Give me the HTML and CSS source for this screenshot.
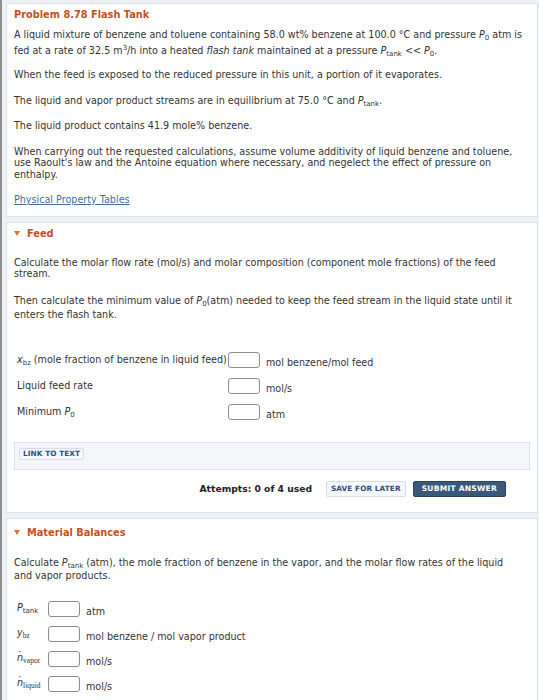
FILE: index.html
```html
<!DOCTYPE html>
<html>
<head>
<meta charset="utf-8">
<link rel="stylesheet" href="styles.css">
</head>
<body>
<div class="page">
  <section class="card intro">
    <h1 class="title">Problem 8.78 Flash Tank</h1>
    <p class="first">A liquid mixture of benzene and toluene containing 58.0 wt% benzene at 100.0 °C and pressure <i>P</i><sub>0</sub> atm is fed at a rate of 32.5 m<sup>3</sup>/h into a heated <i>flash tank</i> maintained at a pressure <i>P</i><sub>tank</sub> &lt;&lt; <i>P</i><sub>0</sub>.</p>
    <p>When the feed is exposed to the reduced pressure in this unit, a portion of it evaporates.</p>
    <p>The liquid and vapor product streams are in equilibrium at 75.0 °C and <i>P</i><sub>tank</sub>.</p>
    <p>The liquid product contains 41.9 mole% benzene.</p>
    <p>When carrying out the requested calculations, assume volume additivity of liquid benzene and toluene, use Raoult's law and the Antoine equation where necessary, and negelect the effect of pressure on enthalpy.</p>
    <p class="linkp"><a class="link" href="#">Physical Property Tables</a></p>
  </section>

  <section class="card part">
    <h2 class="part-head"><span class="tri"></span>Feed</h2>
    <p>Calculate the molar flow rate (mol/s) and molar composition (component mole fractions) of the feed stream.</p>
    <p class="p-tall">Then calculate the minimum value of <i>P</i><sub>0</sub>(atm) needed to keep the feed stream in the liquid state until it enters the flash tank.</p>
    <div class="form feed-form">
      <div class="lbl"><i>x</i><sub>bz</sub> (mole fraction of benzene in liquid feed)</div>
      <div class="box"></div>
      <div class="unit">mol benzene/mol feed</div>
      <div class="lbl">Liquid feed rate</div>
      <div class="box"></div>
      <div class="unit">mol/s</div>
      <div class="lbl">Minimum <i>P</i><sub>0</sub></div>
      <div class="box"></div>
      <div class="unit">atm</div>
    </div>
    <div class="tools">
      <span class="btn-light">LINK TO TEXT</span>
    </div>
    <div class="actions">
      <span class="attempts">Attempts: 0 of 4 used</span>
      <span class="btn-light save">SAVE FOR LATER</span>
      <span class="btn-dark">SUBMIT ANSWER</span>
    </div>
  </section>

  <section class="card part">
    <h2 class="part-head mb-head"><span class="tri"></span>Material Balances</h2>
    <p class="mb-p">Calculate <i>P</i><sub>tank</sub> (atm), the mole fraction of benzene in the vapor, and the molar flow rates of the liquid and vapor products.</p>
    <div class="form mb-form">
      <div class="lbl2"><i>P</i><sub>tank</sub></div>
      <div class="box"></div>
      <div class="unit">atm</div>
      <div class="lbl2"><i>y</i><sub class="serif">bz</sub></div>
      <div class="box"></div>
      <div class="unit">mol benzene / mol vapor product</div>
      <div class="lbl2"><i class="ndot">n</i><sub class="serif">vapor</sub></div>
      <div class="box"></div>
      <div class="unit">mol/s</div>
      <div class="lbl2"><i class="ndot">n</i><sub class="serif">liquid</sub></div>
      <div class="box"></div>
      <div class="unit">mol/s</div>
    </div>
  </section>
</div>
</body>
</html>
```

FILE: styles.css
```css
html, body {
  margin: 0;
  padding: 0;
}
body {
  background: #eef1f5;
  border-left: 2px solid #8e8e8e;
  font-family: "DejaVu Sans", Verdana, sans-serif;
  font-size: 9.6px;
  color: #333;
  min-height: 700px;
  box-sizing: border-box;
}
.page {
  padding: 3px 1px 0 4px;
  display: flex;
  flex-direction: column;
  gap: 5px;
}
.card {
  background: #fff;
  border: 1px solid #dde2e8;
  padding: 5px 7px 8px;
}
p {
  margin: 0 0 14px;
  line-height: 11.5px;
}
sub, sup {
  font-size: 7px;
  line-height: 0;
}
sub {
  vertical-align: -2px;
}
sub.serif {
  font-family: "Liberation Serif", serif;
  font-size: 7.5px;
}
.title {
  font-size: 9.8px;
  font-weight: bold;
  color: #c4501d;
  margin: 0 0 6px;
  line-height: 12px;
}
.intro {
  padding-bottom: 10px;
}
.intro p.first {
  line-height: 16px;
  margin-bottom: 10px;
}
.linkp {
  margin: 0;
}
.link {
  color: #3f6fa3;
}
.part-head {
  display: flex;
  align-items: center;
  gap: 7px;
  font-size: 9.8px;
  font-weight: bold;
  color: #c4501d;
  margin: 0 0 18px;
}
.mb-head {
  margin-top: 3px;
}
.tri {
  width: 0;
  height: 0;
  border-left: 3.5px solid transparent;
  border-right: 3.5px solid transparent;
  border-top: 5px solid #e2702e;
}
.p-tall {
  line-height: 14px;
}
.mb-p {
  padding-right: 16px;
  line-height: 13px;
}
.form {
  display: grid;
  align-items: center;
}
.lbl {
  white-space: nowrap;
}
.feed-form {
  grid-template-columns: 205px 32px auto;
  row-gap: 10px;
  column-gap: 6px;
  margin: 30px 0 22px 3px;
}
.box {
  width: 30px;
  height: 14px;
  border: 1px solid #8d8d8d;
  border-radius: 3px;
  background: #fff;
}
.unit {
  padding-top: 5px;
  line-height: 11px;
}
.tools {
  background: #f4f6f9;
  border: 1px solid #dfe4ea;
  padding: 4px 4px 9px;
}
.btn-light {
  display: inline-block;
  font-size: 7.3px;
  font-weight: bold;
  color: #2f4f7c;
  background: #f4f7fb;
  border: 1px solid #d6dde6;
  border-radius: 2px;
  padding: 1px 3px;
  line-height: 8px;
  letter-spacing: 0.1px;
}
.actions {
  display: flex;
  justify-content: flex-end;
  align-items: center;
  padding: 11px 24px 7px 0;
}
.attempts {
  font-weight: bold;
  font-size: 9.2px;
  color: #222;
  margin-right: 14px;
}
.save {
  padding: 3px 4px;
  margin-right: 7px;
}
.btn-dark {
  font-size: 7.6px;
  font-weight: bold;
  color: #fff;
  background: #3b5878;
  border: 1px solid #2c4560;
  border-radius: 2px;
  padding: 3px 8px;
  line-height: 8px;
  letter-spacing: 0.2px;
}
.mb-form {
  grid-template-columns: 25px 32px auto;
  row-gap: 9px;
  column-gap: 6px;
  margin: 19px 0 4px 3px;
}
.lbl2 {
  align-self: start;
  padding-top: 1px;
  line-height: 11px;
}
.ndot {
  position: relative;
}
.ndot::before {
  content: "·";
  position: absolute;
  left: 1px;
  top: -6px;
}
```
